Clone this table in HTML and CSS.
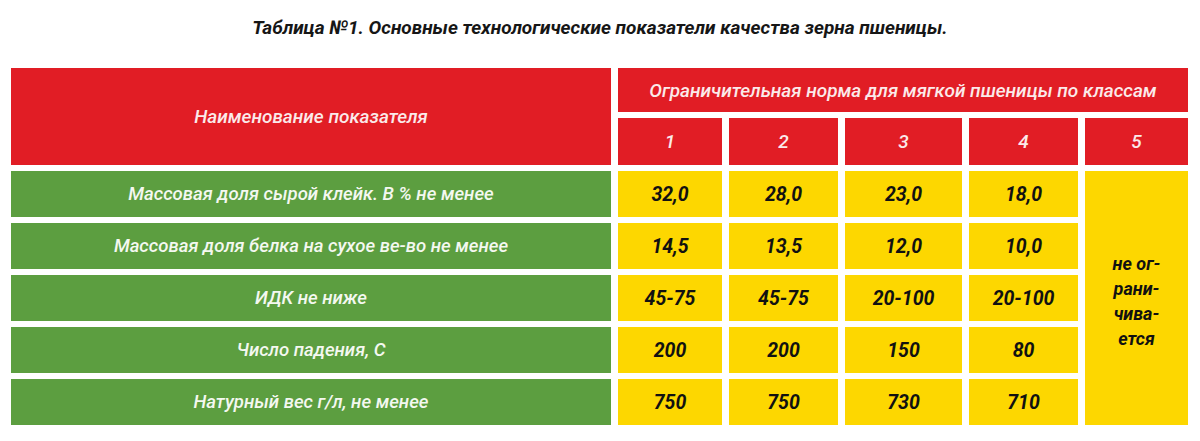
FILE: index.html
```html
<!DOCTYPE html>
<html lang="ru">
<head>
<meta charset="utf-8">
<title>Таблица №1</title>
<link rel="stylesheet" href="styles.css">
</head>
<body>
<div class="page">
  <div class="title">Таблица №1. Основные технологические показатели качества зерна пшеницы.</div>
  <div class="table">
    <div class="cell red name-head">Наименование показателя</div>
    <div class="cell red norm-head">Ограничительная норма для мягкой пшеницы по классам</div>
    <div class="cell red cls">1</div>
    <div class="cell red cls">2</div>
    <div class="cell red cls">3</div>
    <div class="cell red cls">4</div>
    <div class="cell red cls">5</div>

    <div class="cell green">Массовая доля сырой клейк. В % не менее</div>
    <div class="cell yellow">32,0</div>
    <div class="cell yellow">28,0</div>
    <div class="cell yellow">23,0</div>
    <div class="cell yellow">18,0</div>
    <div class="cell yellow unlimited">не ог-<br>рани-<br>чива-<br>ется</div>

    <div class="cell green">Массовая доля белка на сухое ве-во не менее</div>
    <div class="cell yellow">14,5</div>
    <div class="cell yellow">13,5</div>
    <div class="cell yellow">12,0</div>
    <div class="cell yellow">10,0</div>

    <div class="cell green">ИДК не ниже</div>
    <div class="cell yellow">45-75</div>
    <div class="cell yellow">45-75</div>
    <div class="cell yellow">20-100</div>
    <div class="cell yellow">20-100</div>

    <div class="cell green">Число падения, С</div>
    <div class="cell yellow">200</div>
    <div class="cell yellow">200</div>
    <div class="cell yellow">150</div>
    <div class="cell yellow">80</div>

    <div class="cell green">Натурный вес г/л, не менее</div>
    <div class="cell yellow">750</div>
    <div class="cell yellow">750</div>
    <div class="cell yellow">730</div>
    <div class="cell yellow">710</div>
  </div>
</div>
</body>
</html>
```
FILE: styles.css
```css
html, body {
  margin: 0;
  padding: 0;
  background: #ffffff;
}

.page {
  width: 1200px;
  height: 441px;
  padding: 17px 0 0 11px;
  box-sizing: border-box;
  font-family: Roboto, "Noto Sans", "DejaVu Sans", sans-serif;
  font-style: italic;
}

.title {
  width: 1178px;
  text-align: center;
  font-size: 19px;
  line-height: 22px;
  font-weight: 700;
  color: #161616;
  margin-bottom: 29px;
}

.table {
  display: grid;
  grid-template-columns: 600px 104px 109px 117px 109px 103px;
  grid-template-rows: 44px 47px 46px 46px 46px 46px 46px;
  column-gap: 7px;
  row-gap: 6px;
}

.cell {
  display: flex;
  align-items: center;
  justify-content: center;
  text-align: center;
  font-size: 19px;
}

.red {
  background: #e11d25;
  color: #fbeaea;
  font-weight: 500;
}

.name-head {
  grid-column: 1;
  grid-row: 1 / span 2;
}

.norm-head {
  grid-column: 2 / span 5;
  grid-row: 1;
}

.green {
  grid-column: 1;
  background: #5c9e40;
  color: #f4f8f0;
  font-weight: 500;
  font-size: 18.6px;
}

.yellow {
  background: #fdd700;
  color: #111111;
  font-weight: 700;
  font-size: 19.5px;
}

.unlimited {
  grid-column: 6;
  grid-row: 3 / span 5;
  font-size: 18px;
  line-height: 25px;
  padding-top: 6px;
  box-sizing: border-box;
}
```
